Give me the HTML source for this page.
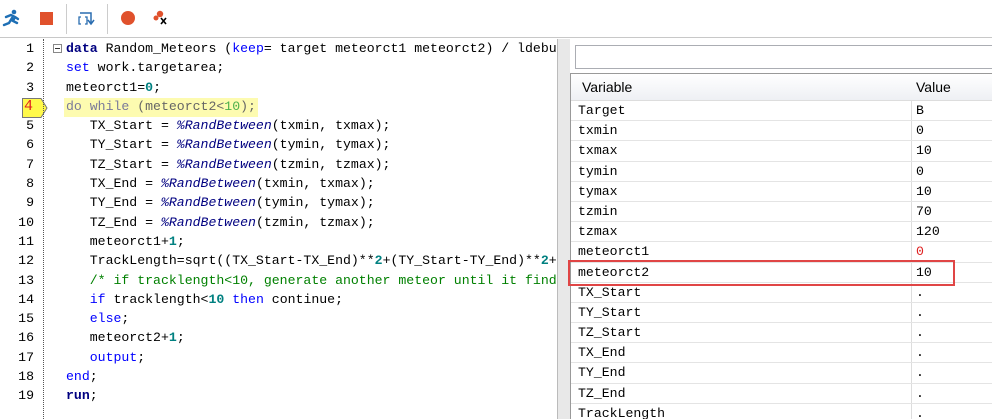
<!DOCTYPE html>
<html><head><meta charset="utf-8"><style>
*{margin:0;padding:0;box-sizing:border-box}
html,body{width:992px;height:419px;overflow:hidden}
body{background:#fff;position:relative;font-family:"Liberation Mono",monospace;font-size:13.2px;color:#000}
.tb{position:absolute;left:0;top:0;width:992px;height:38px;background:#fff;border-bottom:1px solid #c8c8c8}
.sep{position:absolute;top:4px;width:1px;height:30px;background:#ccc}
.gut{position:absolute;left:0;top:39px;width:40px}
.gut div{height:19.3px;line-height:19.3px;text-align:right;color:#000;padding-right:6px}
.dot{position:absolute;left:43px;top:39px;height:380px;border-left:1px dotted #555}
.code{position:absolute;left:66px;top:39px;width:491px;overflow:hidden}
.code div{height:19.3px;line-height:19.3px;white-space:pre}
.k{color:#0000ff}.kb{color:#000080;font-weight:bold}.n{color:#008080;font-weight:bold}.m{color:#000080;font-style:italic}.c{color:#008000}
.sb{position:absolute;left:557px;top:39px;width:13px;height:380px;background:#e8e8e8;border-left:1px solid #bbb}
.inp{position:absolute;left:575px;top:45px;width:420px;height:24px;border:1px solid #abadb3}
.tbl{position:absolute;left:570px;top:73px;width:422px;height:346px;border-left:1px solid #999;border-top:1px solid #999}
.hd{height:27px;background:linear-gradient(#fff,#eef0f4);border-bottom:1px solid #ddd;font-family:"Liberation Sans",sans-serif;font-size:14px;line-height:27px;position:relative}
.row{height:20.2px;line-height:20px;border-bottom:1px solid #e4e4e4;position:relative}
.c1{position:absolute;left:7px}.c2{position:absolute;left:345px}
.vl{position:absolute;left:340px;top:0;width:1px;height:346px;background:#ddd}
.hl{position:absolute;left:568px;top:260px;width:387px;height:26px;border:2px solid #e04545}
</style></head><body>
<div class="tb">
<svg style="position:absolute;left:2px;top:9px" width="20" height="20" viewBox="0 0 20 20"><circle cx="12" cy="3" r="2.3" fill="#1e6fb5"/><path d="M4 8 L9 6 L13 8 L11 12 L15 14 M10 9 L7 14 L2 16 M13 8 L16 10" stroke="#1e6fb5" stroke-width="2.4" fill="none" stroke-linecap="round"/></svg>
<div style="position:absolute;left:40px;top:12px;width:13px;height:13px;background:#e0512c"></div>
<div class="sep" style="left:66px"></div>
<svg style="position:absolute;left:77px;top:10px" width="20" height="18" viewBox="0 0 20 18"><path d="M4 7 H2 V14 H4 M8 7 H10 V14 H8" stroke="#2a6db0" stroke-width="1.3" fill="none"/><path d="M3 3 H14 V13 M11 10 L14 14 L17 10" stroke="#2a6db0" stroke-width="1.5" fill="none"/></svg>
<div class="sep" style="left:107px"></div>
<div style="position:absolute;left:121px;top:11px;width:14px;height:14px;border-radius:50%;background:#e0512c"></div>
<svg style="position:absolute;left:152px;top:9px" width="18" height="18" viewBox="0 0 18 18"><circle cx="8" cy="5" r="3.2" fill="#e0512c"/><circle cx="4" cy="9" r="2.5" fill="#e0512c"/><path d="M9 9 L14 15 M14 9 L9 15" stroke="#000" stroke-width="1.6"/></svg>
</div>
<div style="position:absolute;left:22px;top:98px;width:26px;height:20px"><svg width="26" height="20" viewBox="0 0 26 20"><path d="M0.5 0.5 H19 L25 10 L19 19.5 H0.5 Z" fill="#fff94a" stroke="#777"/></svg></div>
<div class="gut">
<div>1</div><div>2</div><div>3</div><div style="color:#e02020;position:relative;z-index:2;text-align:left;padding-left:24px;font-size:15px">4</div><div>5</div><div>6</div><div>7</div><div>8</div><div>9</div><div>10</div><div>11</div><div>12</div><div>13</div><div>14</div><div>15</div><div>16</div><div>17</div><div>18</div><div>19</div>
</div>
<div class="dot"></div>
<svg style="position:absolute;left:53px;top:44px" width="10" height="10"><rect x="0.5" y="0.5" width="8" height="8" fill="#fff" stroke="#888"/><path d="M2 4.5 H7" stroke="#333"/></svg>
<div style="position:absolute;left:64px;top:98px;width:194px;height:19px;background:#fdfbb0"></div>
<div class="code"><div><span class="kb">data</span> Random_Meteors (<span class="k">keep</span>= target meteorct1 meteorct2) / ldebug;</div><div><span class="k">set</span> work.targetarea;</div><div>meteorct1=<span class="n">0</span>;</div><div style="color:#666"><span style="color:#7a7a9a">do while</span> (meteorct2&lt;<span style="color:#4cb04c">10</span>);</div><div>   TX_Start = <span class="m">%RandBetween</span>(txmin, txmax);</div><div>   TY_Start = <span class="m">%RandBetween</span>(tymin, tymax);</div><div>   TZ_Start = <span class="m">%RandBetween</span>(tzmin, tzmax);</div><div>   TX_End = <span class="m">%RandBetween</span>(txmin, txmax);</div><div>   TY_End = <span class="m">%RandBetween</span>(tymin, tymax);</div><div>   TZ_End = <span class="m">%RandBetween</span>(tzmin, tzmax);</div><div>   meteorct1+<span class="n">1</span>;</div><div>   TrackLength=sqrt((TX_Start-TX_End)**<span class="n">2</span>+(TY_Start-TY_End)**<span class="n">2</span>+</div><div class="c">   /* if tracklength&lt;10, generate another meteor until it finds</div><div>   <span class="k">if</span> tracklength&lt;<span class="n">10</span> <span class="k">then</span> continue;</div><div>   <span class="k">else</span>;</div><div>   meteorct2+<span class="n">1</span>;</div><div>   <span class="k">output</span>;</div><div><span class="k">end</span>;</div><div><span class="kb">run</span>;</div></div>
<div class="sb"></div>
<div class="inp"></div>
<div class="tbl">
<div class="vl"></div>
<div class="hd"><span class="c1" style="left:11px">Variable</span><span class="c2">Value</span></div>
<div class="row"><span class="c1">Target</span><span class="c2">B</span></div>
<div class="row"><span class="c1">txmin</span><span class="c2">0</span></div>
<div class="row"><span class="c1">txmax</span><span class="c2">10</span></div>
<div class="row"><span class="c1">tymin</span><span class="c2">0</span></div>
<div class="row"><span class="c1">tymax</span><span class="c2">10</span></div>
<div class="row"><span class="c1">tzmin</span><span class="c2">70</span></div>
<div class="row"><span class="c1">tzmax</span><span class="c2">120</span></div>
<div class="row"><span class="c1">meteorct1</span><span class="c2" style="color:#e02020">0</span></div>
<div class="row"><span class="c1">meteorct2</span><span class="c2">10</span></div>
<div class="row"><span class="c1">TX_Start</span><span class="c2">.</span></div>
<div class="row"><span class="c1">TY_Start</span><span class="c2">.</span></div>
<div class="row"><span class="c1">TZ_Start</span><span class="c2">.</span></div>
<div class="row"><span class="c1">TX_End</span><span class="c2">.</span></div>
<div class="row"><span class="c1">TY_End</span><span class="c2">.</span></div>
<div class="row"><span class="c1">TZ_End</span><span class="c2">.</span></div>
<div class="row"><span class="c1">TrackLength</span><span class="c2">.</span></div>
</div>
<div class="hl"></div>
</body></html>
